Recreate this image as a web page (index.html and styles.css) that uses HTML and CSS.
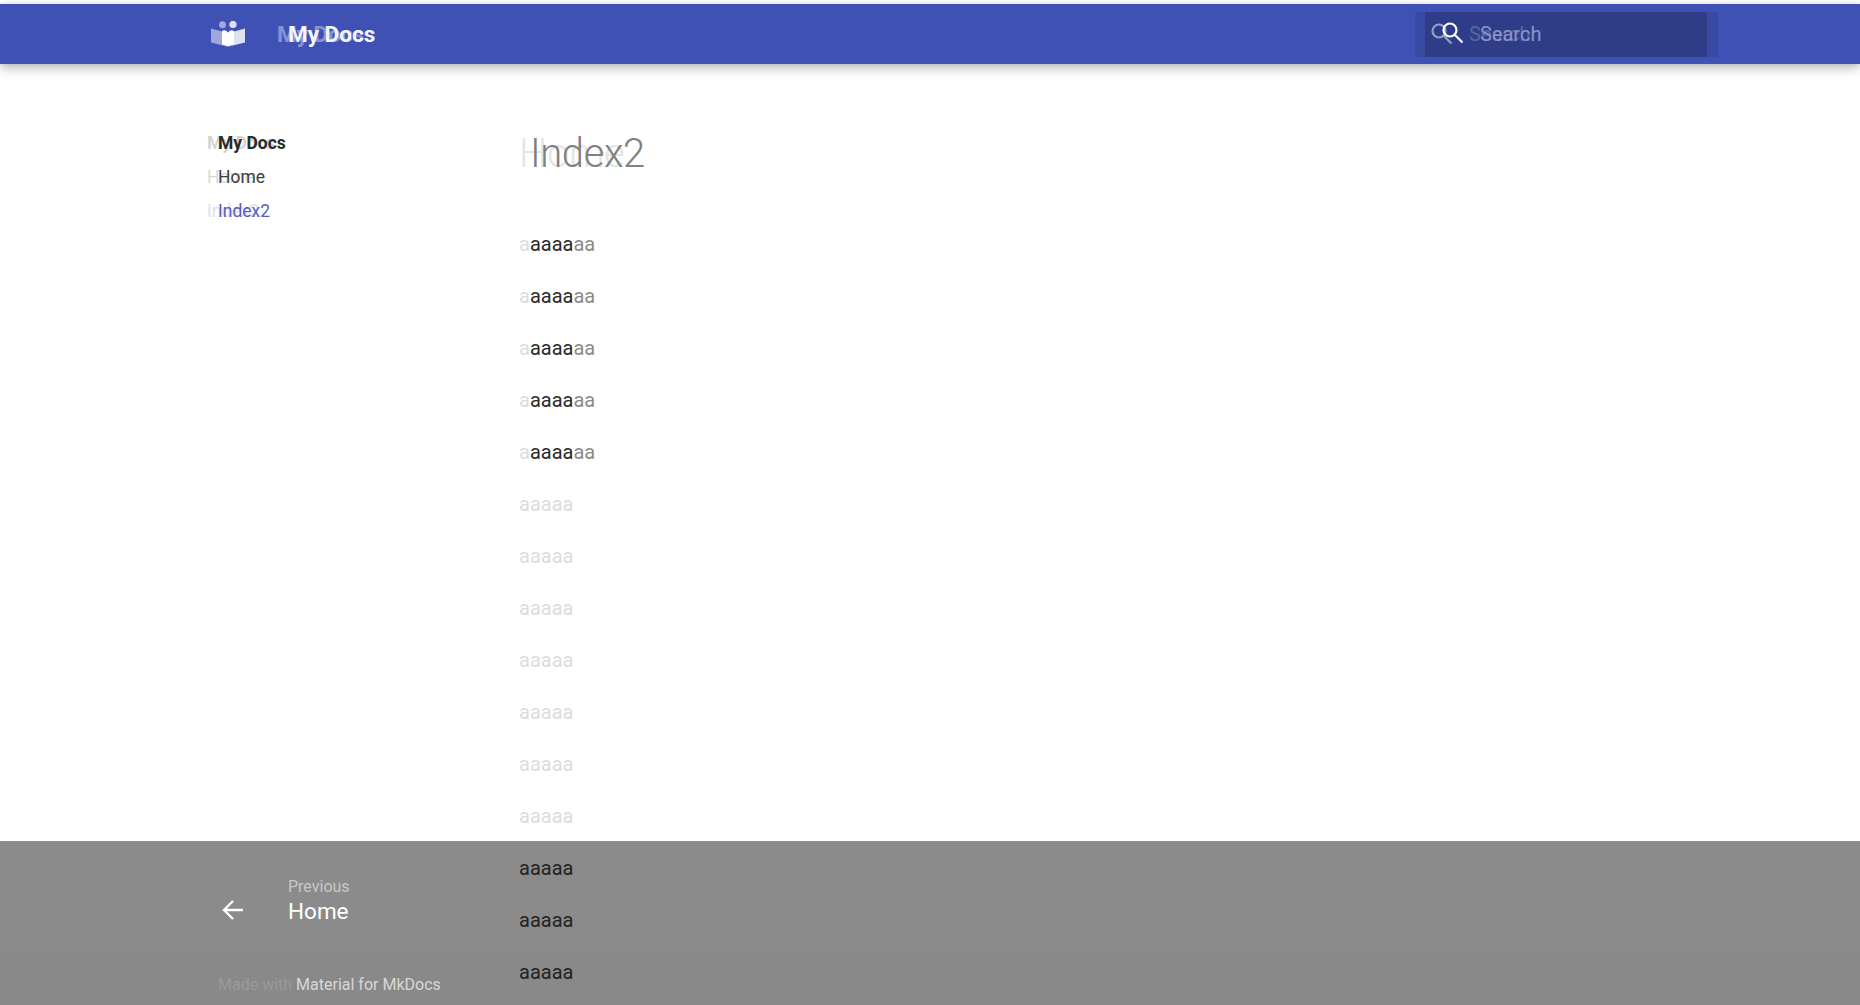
FILE: index.html
```html
<!DOCTYPE html>
<html lang="en">
<head>
<meta charset="utf-8">
<title>Index2 - My Docs</title>
<link rel="stylesheet" href="styles.css">
</head>
<body>
<header class="header">
  <div class="header-inner">
    <svg class="logo" viewBox="0 0 34 26" aria-hidden="true">
      <path class="logo-dim" d="M0 7.500 L11 10.500 L11 23.500 L16 25.500 L0 21.500 Z"/>
      <path class="logo-soft" d="M34 7.500 L23 10.500 L23 23.500 L18 25.500 L34 21.500 Z"/>
      <circle class="logo-dim" cx="11.500" cy="3.800" r="3.500"/>
      <circle class="logo-soft" cx="22" cy="3.500" r="3.600"/>
      <path class="logo-white" d="M11 10 Q14 8 17 11.500 Q20 8 23 10 L23 23.500 L17 25.500 L11 23.500 Z"/>
    </svg>
    <div class="ghosted header-title"><span class="ghost">My Docs</span>My Docs</div>
    <div class="search">
      <div class="search-ghost"></div>
      <svg class="search-icon search-icon-ghost" viewBox="0 0 24 24" aria-hidden="true"><circle cx="8" cy="8" r="6.500"/><path d="M13 13 L20.500 20.500"/></svg>
      <svg class="search-icon search-icon-main" viewBox="0 0 24 24" aria-hidden="true"><circle cx="8" cy="8" r="6.500"/><path d="M13 13 L20.500 20.500"/></svg>
      <div class="ghosted search-label"><span class="ghost">Search</span>Search</div>
    </div>
  </div>
</header>

<div class="container">
  <nav class="nav">
    <div class="ghosted nav-title"><span class="ghost">My Docs</span>My Docs</div>
    <div class="ghosted nav-item"><span class="ghost">Home</span>Home</div>
    <div class="ghosted nav-item nav-active"><span class="ghost">Index2</span>Index2</div>
  </nav>
  <main class="content">
    <h1 class="ghosted page-title"><span class="ghost">Home</span>Index2</h1>
    <p class="row"><span class="c-light">a</span><span class="c-dark">aaaa</span><span class="c-mid">aa</span></p>
    <p class="row"><span class="c-light">a</span><span class="c-dark">aaaa</span><span class="c-mid">aa</span></p>
    <p class="row"><span class="c-light">a</span><span class="c-dark">aaaa</span><span class="c-mid">aa</span></p>
    <p class="row"><span class="c-light">a</span><span class="c-dark">aaaa</span><span class="c-mid">aa</span></p>
    <p class="row"><span class="c-light">a</span><span class="c-dark">aaaa</span><span class="c-mid">aa</span></p>
    <p class="row c-light">aaaaa</p>
    <p class="row c-light">aaaaa</p>
    <p class="row c-light">aaaaa</p>
    <p class="row c-light">aaaaa</p>
    <p class="row c-light">aaaaa</p>
    <p class="row c-light">aaaaa</p>
    <p class="row c-light">aaaaa</p>
    <p class="row c-over">aaaaa</p>
    <p class="row c-over">aaaaa</p>
    <p class="row c-over">aaaaa</p>
  </main>
</div>

<footer class="footer">
  <div class="footer-nav">
    <svg class="arrow" viewBox="0 0 24 24" aria-hidden="true"><path d="M22 12 H3 M12 3 L3 12 L12 21"/></svg>
    <div class="footer-link">
      <div class="footer-dir">Previous</div>
      <div class="footer-page">Home</div>
    </div>
  </div>
  <div class="footer-meta"><span class="made">Made with</span> <span class="material">Material for MkDocs</span></div>
</footer>
</body>
</html>
```

FILE: styles.css
```css
* { box-sizing: border-box; }
html, body { margin: 0; height: 100%; }
body {
  height: 1005px;
  overflow: hidden;
  position: relative;
  background: #fff;
  padding-top: 4px;
  font-family: Roboto, "Liberation Sans", sans-serif;
  color: #2a2a2a;
}
.ghosted { position: relative; }
.ghost { position: absolute; left: -11px; top: 0; white-space: nowrap; opacity: .2; }

.header {
  position: relative;
  z-index: 2;
  height: 60px;
  background: #3f51b5;
  color: #fff;
  box-shadow: 0 0 6px rgba(0,0,0,.12), 0 5px 10px rgba(0,0,0,.22);
}
.header-inner { display: flex; align-items: center; height: 100%; padding-left: 211px; }
.logo { width: 34px; height: 26px; margin-top: -1px; flex: none; }
.logo-dim { fill: #9fa8da; }
.logo-soft { fill: #dfe1f1; }
.logo-white { fill: #fff; }
.header-title { margin-left: 43px; font-size: 22.5px; font-weight: 700; line-height: 60px; color: #f4f5fb; }
.header-title .ghost { opacity: .4; }

.search {
  position: relative;
  display: flex;
  align-items: center;
  width: 282px;
  height: 45px;
  margin-left: auto;
  margin-right: 153px;
  padding-left: 17px;
  background: #2f3d88;
  border-radius: 2px;
}
.search-ghost {
  position: absolute;
  left: -10px;
  right: -11px;
  top: 0;
  bottom: 0;
  background: #394aa3;
  border-radius: 2px;
  z-index: -1;
}
.search-icon { width: 24px; height: 24px; fill: none; stroke: #fff; stroke-width: 2.200; flex: none; }
.search-icon-ghost { position: absolute; left: 6px; top: 11px; opacity: .5; }
.search-label { margin-left: 14px; font-size: 20px; color: #8c95c6; }
.search-label .ghost { opacity: .45; }

.container { display: flex; padding-left: 218px; }
.nav { width: 301px; padding-top: 62px; font-size: 17.5px; line-height: 34px; flex: none; }
.nav-title { font-weight: 700; }
.nav-item { color: #3d3d3d; }
.nav-active { color: #5361b8; }
.content { padding-top: 62px; font-size: 20px; line-height: 32px; position: relative; z-index: 1; }
.page-title { margin: 0 0 46px 11px; font-size: 40px; font-weight: 300; line-height: 56px; letter-spacing: -.01em; color: #808080; }
.row { margin: 0 0 20px 0; line-height: 32px; }
.c-light { color: #dcdcdc; }
.c-dark { color: #2a2a2a; }
.c-mid { color: #8a8a8a; }
.c-over { color: #222; }

.footer {
  position: absolute;
  left: 0;
  right: 0;
  bottom: 0;
  height: 164px;
  background: #8b8b8b;
  color: #fff;
}
.footer-nav { display: flex; align-items: center; height: 111px; padding: 5px 0 0 221px; }
.arrow { width: 24px; height: 24px; margin-top: 22px; fill: none; stroke: #fff; stroke-width: 2.400; flex: none; }
.footer-link { margin-left: 43px; }
.footer-dir { font-size: 16px; line-height: 24px; color: #c8c8c8; }
.footer-page { font-size: 22.5px; line-height: 25px; }
.footer-meta { height: 53px; background: #898989; padding: 21px 0 0 218px; font-size: 16px; line-height: 24px; }
.made { color: #999; }
.material { color: #d8d8d8; }
```
